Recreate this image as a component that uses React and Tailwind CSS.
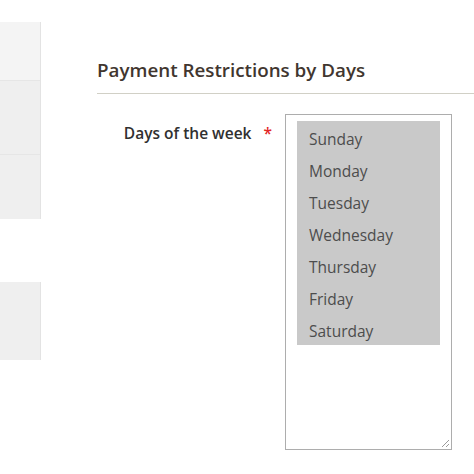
import React from 'react';

const days = ['Sunday', 'Monday', 'Tuesday', 'Wednesday', 'Thursday', 'Friday', 'Saturday'];

export default function App() {
  return (
    <div className="flex min-h-[474px] bg-white font-['Open_Sans',sans-serif]">
      {/* left tabs, cut off by the frame */}
      <aside className="w-[41px] shrink-0">
        <div className="mt-[22px] border-r border-[#e3e3e3]">
          <div className="h-[59px] bg-[#f4f4f4] border-b border-[#e6e6e6]" />
          <div className="h-[74px] bg-[#efefef] border-b border-[#e6e6e6]" />
          <div className="h-[64px] bg-[#efefef]" />
        </div>
        <div className="mt-[63px] h-[78px] bg-[#efefef] border-r border-[#e3e3e3]" />
      </aside>

      <main className="ml-[56px] flex-1 pt-[58px]">
        <div className="border-b border-[#d1d0c6] pb-[10px]">
          <h2 className="text-[18.8px] leading-[25px] font-semibold text-[#41362f]">
            Payment Restrictions by Days
          </h2>
        </div>

        <div className="mt-[20px] flex">
          <label className="flex w-[188px] justify-end pr-[13px] pt-[9px] text-[15.5px] leading-[20px] font-semibold text-[#303030]">
            <span>Days of the week</span>
            <span className="ml-[12px] text-[#e22626]">*</span>
          </label>

          <div className="relative h-[336px] w-[167px] border border-[#adadad] bg-white pl-[11px] pt-[6px]">
            <div className="w-[143px] bg-[#c9c9c9]">
              {days.map((d) => (
                <div key={d} className="h-[32px] pl-[12px] pt-[2px] text-[15.5px] leading-[32px] text-[#4d4d4d]">
                  {d}
                </div>
              ))}
            </div>
            <svg className="absolute bottom-[1px] right-[1px]" width="10" height="10" viewBox="0 0 10 10">
              <path d="M9 2 L2 9 M9 6 L6 9" stroke="#9a9a9a" strokeWidth="1" />
            </svg>
          </div>
        </div>
      </main>
    </div>
  );
}
